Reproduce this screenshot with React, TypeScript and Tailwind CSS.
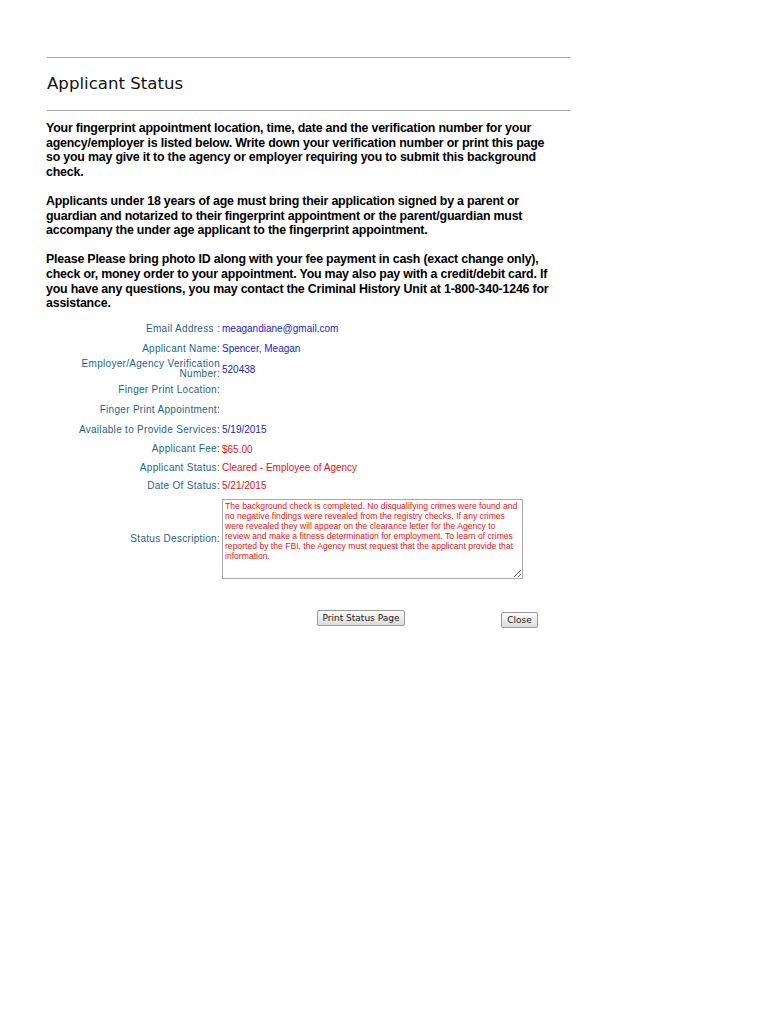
import { ReactNode } from "react";

const rows: { label: ReactNode; value?: string; tone?: "blue" | "red"; h: string }[] = [
  { label: "Email Address :", value: "meagandiane@gmail.com", tone: "blue", h: "h-[20px]" },
  { label: "Applicant Name:", value: "Spencer, Meagan", tone: "blue", h: "h-[20px]" },
  {
    label: (
      <>
        Employer/Agency Verification
        <br />
        Number:
      </>
    ),
    value: "520438",
    tone: "blue",
    h: "h-[21px]",
  },
  { label: "Finger Print Location:", h: "h-[20px]" },
  { label: "Finger Print Appointment:", h: "h-[20px]" },
  { label: "Available to Provide Services:", value: "5/19/2015", tone: "blue", h: "h-[20px]" },
  { label: "Applicant Fee:", value: "$65.00", tone: "red", h: "h-[19px]" },
  { label: "Applicant Status:", value: "Cleared - Employee of Agency", tone: "red", h: "h-[18px]" },
  { label: "Date Of Status:", value: "5/21/2015", tone: "red", h: "h-[18px]" },
];

const statusText =
  "The background check is completed. No disqualifying crimes were found and no negative findings were revealed from the registry checks. If any crimes were revealed they will appear on the clearance letter for the Agency to review and make a fitness determination for employment. To learn of crimes reported by the FBI, the Agency must request that the applicant provide that information.";

export default function App() {
  return (
    <div className="min-h-[1024px] bg-white pt-[57px] pl-[47px]">
      <div className="w-[524px]">
        <div className="border-t border-[#a8a8a8]" />
        <h1 className="mt-[15px] mb-[16px] text-[16.6px] leading-[21px] text-[#111] font-['DejaVu_Sans',sans-serif]">
          Applicant Status
        </h1>
        <div className="border-t border-[#a8a8a8]" />
      </div>

      <div className="mt-[10px] -ml-[1px] w-[512px] font-['Liberation_Sans',Arial,sans-serif] text-[12.4px] font-bold leading-[14.6px] tracking-[-0.2px] text-black">
        <p>
          Your fingerprint appointment location, time, date and the verification number for your
          agency/employer is listed below. Write down your verification number or print this page so
          you may give it to the agency or employer requiring you to submit this background check.
        </p>
        <p className="mt-[14.6px]">
          Applicants under 18 years of age must bring their application signed by a parent or
          guardian and notarized to their fingerprint appointment or the parent/guardian must
          accompany the under age applicant to the fingerprint appointment.
        </p>
        <p className="mt-[14.6px]">
          Please Please bring photo ID along with your fee payment in cash (exact change only), check
          or, money order to your appointment. You may also pay with a credit/debit card. If you have
          any questions, you may contact the Criminal History Unit at 1-800-340-1246 for assistance.
        </p>
      </div>

      <div className="mt-[8px] font-['Liberation_Sans',Arial,sans-serif] text-[10px]">
        {rows.map((r, i) => (
          <div key={i} className={`flex items-center ${r.h}`}>
            <div className="w-[173px] text-right leading-[10px] tracking-[0.3px] text-[#1f5f8b]">
              {r.label}
            </div>
            <div
              className={`pl-[2px] ${r.tone === "red" ? "text-[#e81010]" : "text-[#2020d0]"}`}
            >
              {r.value}
            </div>
          </div>
        ))}
        <div className="mt-[4px] flex items-center">
          <div className="w-[173px] text-right tracking-[0.3px] text-[#1f5f8b]">Status Description:</div>
          <textarea
            readOnly
            defaultValue={statusText}
            className="ml-[2px] h-[80px] w-[301px] resize border border-[#a9a9a9] px-[2px] py-[1px] text-[8.6px] leading-[10px] text-[#ee1111] font-['Liberation_Sans',Arial,sans-serif] outline-none"
          />
        </div>
      </div>

      <div className="mt-[31px] flex items-start font-['DejaVu_Sans',sans-serif] text-[9px] text-[#222]">
        <button className="ml-[270px] h-[16px] w-[88px] rounded-[2px] border border-[#9a9a9a] bg-gradient-to-b from-[#fbfbfb] to-[#dcdcdc] leading-[14px]">
          Print Status Page
        </button>
        <button className="ml-[96px] mt-[2px] h-[16px] w-[37px] rounded-[2px] border border-[#9a9a9a] bg-gradient-to-b from-[#fbfbfb] to-[#dcdcdc] leading-[14px]">
          Close
        </button>
      </div>
    </div>
  );
}
